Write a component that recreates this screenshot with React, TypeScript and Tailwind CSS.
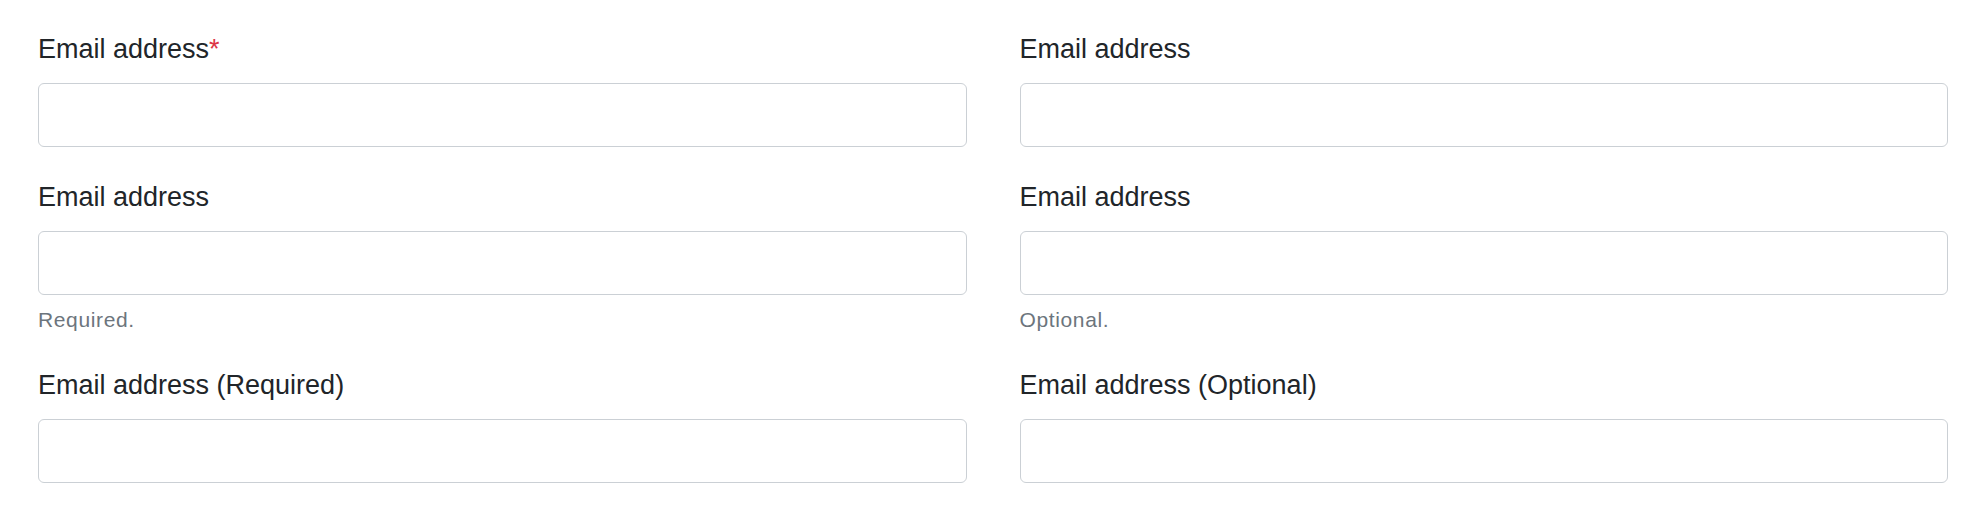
import React from "react";

const font = { fontFamily: '"Liberation Sans", Arial, sans-serif' };

function Field({
  label,
  required,
  help,
  className,
}: {
  label: string;
  required?: boolean;
  help?: string;
  className?: string;
}) {
  return (
    <div className={"flex flex-col " + (className ?? "")}>
      <label className="text-[27px] leading-[40px] text-[#212529] mb-[14px]">
        {label}
        {required && <span className="text-[#dc3545]">*</span>}
      </label>
      <input
        type="email"
        className="h-[64px] w-full rounded-[6px] border-[1.5px] border-[#cbd0d5] bg-white outline-none"
      />
      {help && (
        <div className="mt-[10px] text-[21px] leading-[30px] tracking-[0.03em] text-[#6c757d]">
          {help}
        </div>
      )}
    </div>
  );
}

export default function App() {
  return (
    <div className="min-h-[528px] w-full bg-white pt-[29px] pl-[38px] pr-[32px]" style={font}>
      <div className="grid grid-cols-2 gap-x-[53px]">
        <Field label="Email address" required className="mb-[29.5px]" />
        <Field label="Email address" className="mb-[29.5px]" />
        <Field label="Email address" help="Required." className="mb-[30.5px]" />
        <Field label="Email address" help="Optional." className="mb-[30.5px]" />
        <Field label="Email address (Required)" />
        <Field label="Email address (Optional)" />
      </div>
    </div>
  );
}
